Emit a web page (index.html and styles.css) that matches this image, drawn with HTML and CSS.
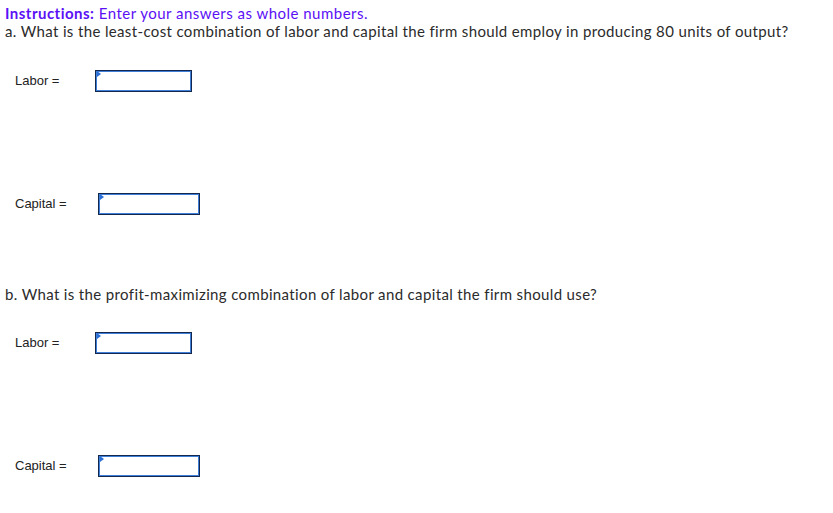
FILE: index.html
```html
<!DOCTYPE html>
<html>
<head>
<meta charset="utf-8">
<link rel="stylesheet" href="styles.css">
</head>
<body>
<div class="page">
  <p class="instructions"><strong>Instructions:</strong> Enter your answers as whole numbers.</p>
  <p class="question">a. What is the least-cost combination of labor and capital the firm should employ in producing 80 units of output?</p>
  <div class="answers answers-a">
    <div class="row row-labor">
      <span class="label">Labor =</span>
      <span class="field"><input type="text"></span>
    </div>
    <div class="row row-capital">
      <span class="label">Capital =</span>
      <span class="field"><input type="text"></span>
    </div>
  </div>
  <p class="question question-b">b. What is the profit-maximizing combination of labor and capital the firm should use?</p>
  <div class="answers answers-b">
    <div class="row row-labor">
      <span class="label">Labor =</span>
      <span class="field"><input type="text"></span>
    </div>
    <div class="row row-capital">
      <span class="label">Capital =</span>
      <span class="field"><input type="text"></span>
    </div>
  </div>
</div>
</body>
</html>
```

FILE: styles.css
```css
html, body {
  margin: 0;
  padding: 0;
  background: #ffffff;
}

.page {
  padding: 4px 0 0 5px;
  font-family: Lato, "Open Sans", sans-serif;
  font-variant-ligatures: none;
  color: #333333;
}

.instructions {
  margin: 0;
  font-size: 15px;
  line-height: 18px;
  letter-spacing: 0.48px;
  color: #5b10f5;
}

.instructions strong {
  font-weight: 700;
}

.question {
  margin: 0;
  font-size: 15px;
  line-height: 18px;
  letter-spacing: 0.36px;
  color: #2b2b2b;
}

.answers {
  display: flex;
  flex-direction: column;
  padding-left: 10px;
}

.answers-a {
  padding-top: 28px;
  padding-bottom: 70px;
}

.answers-b {
  padding-top: 27px;
}

.row {
  display: flex;
  align-items: center;
  height: 24px;
}

.row-capital {
  margin-top: 99px;
}

.label {
  font-family: "Liberation Sans", Arial, sans-serif;
  font-size: 13px;
  color: #222222;
}

.row-labor .label {
  width: 80px;
}

.row-capital .label {
  width: 83px;
}

.field {
  position: relative;
  display: inline-block;
}

.field::before {
  content: "";
  position: absolute;
  left: 2px;
  top: 2px;
  width: 0;
  height: 0;
  border-top: 3px solid transparent;
  border-bottom: 3px solid transparent;
  border-left: 4px solid #2a6fd6;
}

.row-labor input {
  width: 95px;
}

.row-capital input {
  width: 100px;
}

input {
  box-sizing: content-box;
  height: 20px;
  margin: 0;
  padding: 0;
  border: 1px solid #14284d;
  box-shadow: inset 0 0 0 1px #3f7fd9;
  background: #ffffff;
  font-size: 12px;
  outline: none;
}
```
